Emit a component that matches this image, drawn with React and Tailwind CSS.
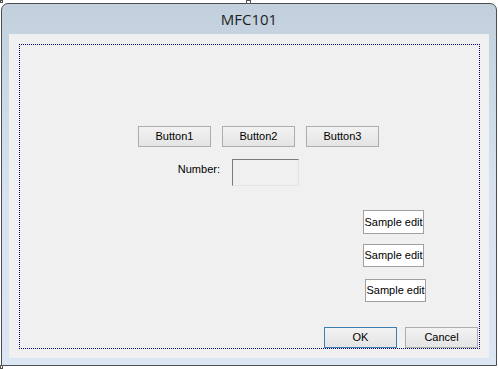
import React from 'react';

const font = { fontFamily: '"Liberation Sans", Arial, sans-serif' };

const Btn = ({ label, blue }) => (
  <div
    className={`flex items-center justify-center w-[73px] h-[21px] text-[11px] text-black bg-gradient-to-b from-[#f2f2f2] to-[#e4e4e4] border ${
      blue ? 'border-[#3c7fb1]' : 'border-[#adadad]'
    }`}
  >
    {label}
  </div>
);

const SampleEdit = ({ className = '' }) => (
  <div
    className={`flex items-center justify-center w-[61px] bg-white border border-[#a0a0a0] text-[11px] text-black ${className}`}
  >
    Sample edit
  </div>
);

const App = () => {
  return (
    <div className="relative w-[498px] h-[369px] bg-white overflow-hidden" style={font}>
      {/* resize handles */}
      <div className="absolute left-0 top-0 w-[3px] h-[3px] border border-[#555] bg-white" />
      <div className="absolute left-[246px] top-0 w-[5px] h-[4px] border border-[#555] bg-white" />
      <div className="absolute left-0 top-[365px] w-[3px] h-[4px] border border-[#555] bg-white" />

      {/* window */}
      <div className="ml-[1px] mt-[3px] w-[496px] h-[363px] border border-[#4d4d4d] rounded-t-[7px] bg-gradient-to-b from-[#c2d0de] via-[#d6e2ee] to-[#dce7f3] flex flex-col px-[7px] pb-[7px]">
        {/* title */}
        <div
          className="h-[30px] flex items-center justify-center text-[15px] text-[#1e1e1e]"
          style={{ fontFamily: '"Open Sans", "Noto Sans", sans-serif' }}
        >
          MFC101
        </div>

        {/* client area */}
        <div className="flex-1 bg-[#f0f0f0] pt-[10px] pl-[10px] pr-[9px] pb-[9px]">
          <div className="flex flex-col w-full h-full border border-dotted border-[#000080]">
            {/* buttons */}
            <div className="flex gap-[11px] pt-[81px] pl-[118px]">
              <Btn label="Button1" />
              <Btn label="Button2" />
              <Btn label="Button3" />
            </div>

            {/* number */}
            <div className="flex mt-[12px] pl-[118px]">
              <div className="w-[82px] pt-[2px] text-right text-[11px] text-black">Number:</div>
              <div className="ml-[12px] w-[67px] h-[27px] bg-[#f0f0f0] border border-t-[#7a7a7a] border-l-[#7a7a7a] border-r-[#e3e3e3] border-b-[#e3e3e3]" />
            </div>

            {/* sample edits */}
            <div className="flex flex-col items-start mt-[24px] pl-[343px]">
              <SampleEdit className="h-[24px]" />
              <SampleEdit className="h-[23px] mt-[10px]" />
              <SampleEdit className="h-[23px] mt-[12px] ml-[2px]" />
            </div>

            {/* ok / cancel */}
            <div className="flex gap-[8px] mt-auto pl-[304px]">
              <Btn label="OK" blue />
              <Btn label="Cancel" />
            </div>
          </div>
        </div>
      </div>
    </div>
  );
};

export default App;
